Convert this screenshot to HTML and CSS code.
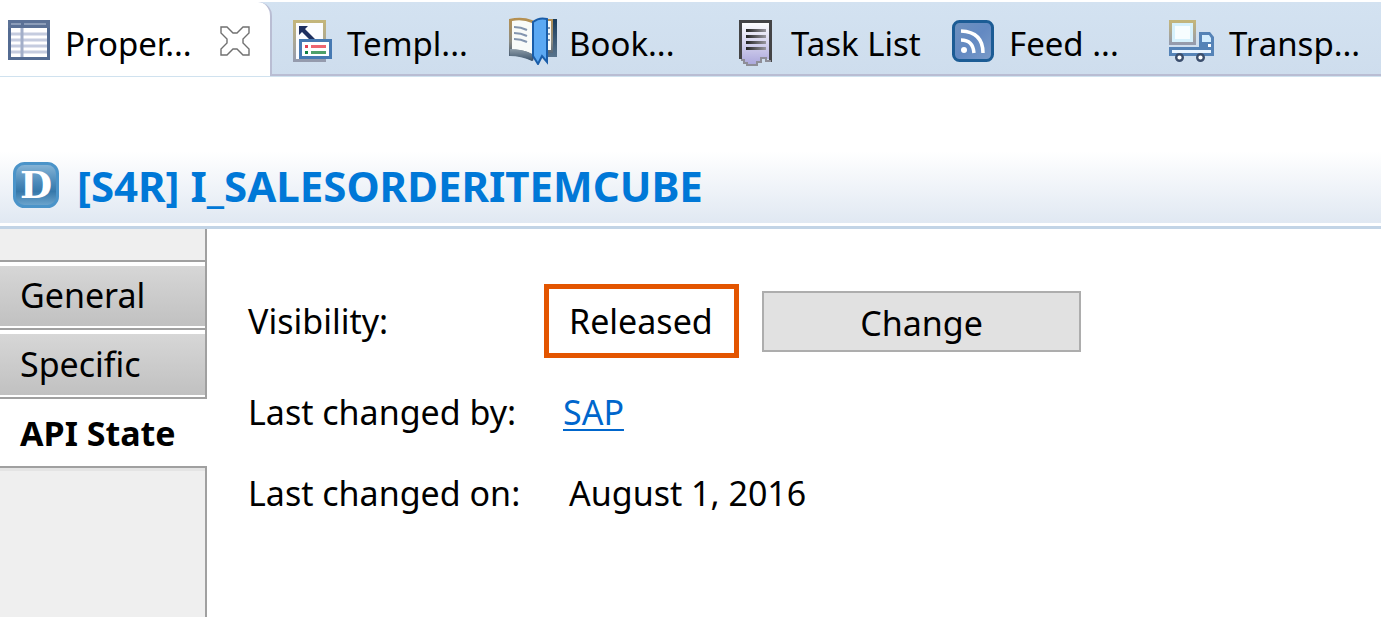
FILE: index.html
```html
<!DOCTYPE html>
<html lang="en">
<head>
<meta charset="utf-8">
<title>Properties</title>
<link rel="stylesheet" href="styles.css">
</head>
<body>
<div class="view">
  <nav class="tabs" aria-label="Views">
    <div class="tab tab-active">
      <svg class="icon" width="42" height="42" viewBox="0 0 42 42" aria-hidden="true">
        <rect x="1.5" y="1.5" width="39" height="37" fill="#fff" stroke="#536b92" stroke-width="3"/>
        <rect x="0" y="0" width="42" height="8" fill="#5b7196"/>
        <path d="M3 4h10M16 4h22" stroke="#8c9db9" stroke-width="2"/>
        <path d="M3 14h36M3 20h36M3 26h36M3 32h36" stroke="#c5ccdf" stroke-width="3"/>
        <path d="M14 8v29" stroke="#a3afc9" stroke-width="3"/>
      </svg>
      <button class="tab-label">Proper...</button>
      <button class="close" aria-label="Close">
        <svg width="30" height="30" viewBox="0 0 30 30" aria-hidden="true"><path d="M1 1h6l6 6h4l6-6h6v6l-6 6v4l6 6v6h-6l-6-6h-4l-6 6H1v-6l6-6v-4L1 7z" fill="#fff" stroke="#707070" stroke-width="1.4"/></svg>
      </button>
    </div>
    <div class="tab">
      <svg class="icon" width="39" height="42" viewBox="0 0 39 42" aria-hidden="true">
        <defs><linearGradient id="page" x2="0" y2="1"><stop stop-color="#c3b57b"/><stop offset="1" stop-color="#959bad"/></linearGradient></defs>
        <rect x="1.5" y="1.5" width="30" height="39" fill="#fbfcff" stroke="url(#page)" stroke-width="3"/>
        <path d="M6 6h9l-3 3 10 10-3 3L9 12l-3 3z" fill="#1d2f60"/>
        <rect x="7.500" y="20.500" width="30" height="17" fill="#fff" stroke="#4679b2" stroke-width="3"/>
        <path d="M12 25h3v3h-3z" fill="#e04152"/><path d="M18 25h15v3H18z" fill="#ee6670"/>
        <path d="M12 31h3v3h-3z" fill="#108044"/><path d="M18 31h15v3H18z" fill="#4fa16a"/>
      </svg>
      <button class="tab-label">Templ...</button>
    </div>
    <div class="tab">
      <svg class="icon icon-book" width="48" height="48" viewBox="0 0 48 48" aria-hidden="true">
        <defs>
          <linearGradient id="cover" x2="0" y2="1"><stop stop-color="#b7904f"/><stop offset=".55" stop-color="#8c8c84"/><stop offset="1" stop-color="#344f70"/></linearGradient>
          <linearGradient id="back" x2="0" y2="1"><stop stop-color="#183b5b"/><stop offset="1" stop-color="#58738c"/></linearGradient>
          <linearGradient id="edge" x2="0" y2="1"><stop stop-color="#8d9ca8"/><stop offset="1" stop-color="#3c536b"/></linearGradient>
        </defs>
        <path d="M40 2h8v38H34V6z" fill="url(#back)"/>
        <path d="M0 2q13-3 23 1l2 1 3-2h16v34H26l-2 8Q12 38 0 39z" fill="url(#cover)"/>
        <path d="M3 4q11-2 20 2v31Q13 32 3 33zM38 4h4v29h-4z" fill="#f9fbf9"/>
        <path d="M1 32q12 0 22 5v7Q12 39 1 39z" fill="url(#edge)"/>
        <path d="M5 10q7 0 13 3M5 16q7 0 13 3M5 22q7 0 13 3M39 11h2M39 17h2M39 23h2" fill="none" stroke="#8395af" stroke-width="2"/>
        <path d="M24 5q6-5 14-3v43l-5-6-4 8-5-8z" fill="#5ca9f3" stroke="#195da9" stroke-width="2"/>
      </svg>
      <button class="tab-label">Book...</button>
    </div>
    <div class="tab">
      <svg class="icon icon-task" width="37" height="46" viewBox="0 0 37 46" aria-hidden="true">
        <defs><linearGradient id="sheet" x2="0" y2="1"><stop stop-color="#fff"/><stop offset="1" stop-color="#aaa6dc"/></linearGradient>
        <linearGradient id="rows"><stop stop-color="#222"/><stop offset="1" stop-color="#99979f"/></linearGradient></defs>
        <path d="M2 2h30v37h-10v3h-4v3H8v-3H5v-3H2z" fill="url(#sheet)"/>
        <path d="M1.500 39V1.500h30V42" fill="none" stroke="#444446" stroke-width="3"/>
        <path d="M2 40h3v3h3v2h10v-3h4v-4h5v3h5" fill="none" stroke="#8e8e98" stroke-width="2"/>
        <path d="M7 9h20v3H7zM7 15h20v3H7zM7 21h20v3H7zM7 27h20v3H7z" fill="url(#rows)"/>
      </svg>
      <button class="tab-label">Task List</button>
    </div>
    <div class="tab">
      <svg class="icon" width="42" height="42" viewBox="0 0 42 42" aria-hidden="true">
        <defs><linearGradient id="feed" x2="1" y2="1"><stop stop-color="#6f91bd"/><stop offset=".5" stop-color="#6389c2"/><stop offset="1" stop-color="#7b9bc8"/></linearGradient></defs>
        <rect x="1.500" y="1.500" width="39" height="39" rx="6" fill="url(#feed)" stroke="#1c5c95" stroke-width="3"/>
        <circle cx="12" cy="30" r="3" fill="#fff"/>
        <path d="M9 20q12 0 13 13M9 11q22 1 22 22" fill="none" stroke="#fff" stroke-width="3.500"/>
      </svg>
      <button class="tab-label">Feed ...</button>
    </div>
    <div class="tab">
      <svg class="icon" width="45" height="42" viewBox="0 0 45 42" aria-hidden="true">
        <rect x="1.500" y="1.500" width="24" height="22" fill="#d6f1fd" stroke="url(#page)" stroke-width="3"/>
        <path d="M6 6h15v13H6z" fill="#f7fdff"/>
        <path d="M30 12h11l4 5v19H0v-9h30z" fill="#5583b7"/>
        <path d="M33 15h7l2 3v4h-9z" fill="#d3edff"/><path d="M39 24h3v3h-3z" fill="#fff"/><path d="M3 30h39v3H3z" fill="#e9f4ff"/>
        <circle cx="10.500" cy="37.500" r="3.300" fill="#fff" stroke="#3b4e6d" stroke-width="2.400"/>
        <circle cx="31.500" cy="37.500" r="3.300" fill="#fff" stroke="#3b4e6d" stroke-width="2.400"/>
      </svg>
      <button class="tab-label">Transp...</button>
    </div>
  </nav>

  <header class="title-bar">
    <svg width="46" height="46" viewBox="0 0 46 46" aria-hidden="true">
      <defs><linearGradient id="badge" x2="0" y2="1"><stop stop-color="#8ab7d8"/><stop offset=".45" stop-color="#4a89b9"/><stop offset=".65" stop-color="#3678aa"/><stop offset="1" stop-color="#70a8d0"/></linearGradient></defs>
      <rect x="1.500" y="1.500" width="43" height="43" rx="10" fill="url(#badge)" stroke="#4b94c9" stroke-width="3"/>
      <text class="badge-letter" x="23" y="36" text-anchor="middle">D</text>
    </svg>
    <h1 class="title">[S4R] I_SALESORDERITEMCUBE</h1>
  </header>

  <div class="body">
    <nav class="sections" aria-label="Property sections">
      <div class="filler filler-top"></div>
      <button class="section">General</button>
      <button class="section">Specific</button>
      <button class="section section-active">API State</button>
      <div class="filler filler-rest"></div>
    </nav>
    <main class="details">
      <div class="label">Visibility:</div>
      <div class="visibility">
        <div class="status">Released</div>
        <button class="change">Change</button>
      </div>
      <div class="label">Last changed by:</div>
      <div><a class="user" href="#">SAP</a></div>
      <div class="label">Last changed on:</div>
      <div class="date">August 1, 2016</div>
    </main>
  </div>
</div>
</body>
</html>
```
FILE: styles.css
```css
* { box-sizing: border-box; }
body {
  margin: 0;
  background: #fff;
  color: #000;
  font: 34px/48px "Noto Sans", "Open Sans", sans-serif;
}
button {
  margin: 0;
  padding: 0;
  border: 0;
  background: none;
  color: inherit;
  font: inherit;
  text-align: left;
}
svg { display: block; flex: none; }
.view { display: flex; flex-direction: column; min-height: 100vh; }

.tabs {
  display: grid;
  grid-template-columns: 272fr 216fr 230fr 213fr 217fr 233fr;
  height: 75px;
  margin-top: 2px;
  background: linear-gradient(#d3e2f1, #cedded);
  border-bottom: 1px solid #d0e2ef;
  box-shadow: inset 0 -2px #b9bdd3;
  font-size: 33px;
}
.tab { display: flex; align-items: flex-start; gap: 15px; padding: 18px 0 0 21px; min-width: 0; }
.tab-active {
  padding-left: 8px;
  background: #fff;
  border-right: 2px solid #b9bdd3;
  border-top-right-radius: 14px;
}
.tab-label { white-space: nowrap; }
.icon-book { margin: -3px -3px 0 0; }
.close { margin: 6px 20px 0 auto; }

.title-bar {
  display: flex;
  align-items: center;
  gap: 18px;
  height: 152px;
  padding: 66px 13px 0;
  background: linear-gradient(#fff 50%, #e0e8f2 98%, #fff 98%);
  border-bottom: 3px solid #c2d4e6;
}
.title { margin: 0; padding-top: 2px; color: #0078d7; font-size: 42px; line-height: 56px; white-space: nowrap; }
.badge-letter { fill: #fff; font: bold 37px "DejaVu Serif", serif; }

.body { display: flex; flex: 1; }
.sections { display: flex; flex-direction: column; flex: none; width: 207px; }
.filler { background: #efefef; border-right: 2px solid #a0a0a0; }
.filler-top { height: 31px; }
.filler-rest { flex: 1; border-top: 2px solid #a0a0a0; box-shadow: inset 0 3px #e4e4e4; }
.section {
  height: 69px;
  padding: 0 0 0 20px;
  border: solid #a0a0a0;
  border-width: 0 2px 2px 0;
  background: linear-gradient(#d8d8d8, #c0c0c0);
  box-shadow: inset 0 4px #fff, inset 0 -2px #fff;
}
.filler-top + .section { height: 70px; border-top: 2px solid #a0a0a0; }
.section-active { height: 67px; border: 0; background: #fff; box-shadow: none; font-weight: bold; }

.details {
  display: grid;
  grid-template-columns: 296px 1fr;
  grid-template-rows: 74px 48px 54px;
  row-gap: 30px;
  align-items: center;
  align-content: start;
  flex: 1;
  padding: 55px 41px 0;
}
.label, .date { white-space: nowrap; }
.visibility { display: flex; align-items: center; gap: 23px; }
.status { width: 195px; height: 74px; padding: 8px 20px; border: 5px solid #e35500; }
.change { width: 319px; height: 61px; padding-top: 4px; border: 2px solid #adadad; background: #e1e1e1; text-align: center; }
.user {
  margin-left: 19px;
  color: #0066cc;
  text-decoration-thickness: 2px;
  text-underline-offset: 4px;
}
.date { padding-left: 25px; }
```
